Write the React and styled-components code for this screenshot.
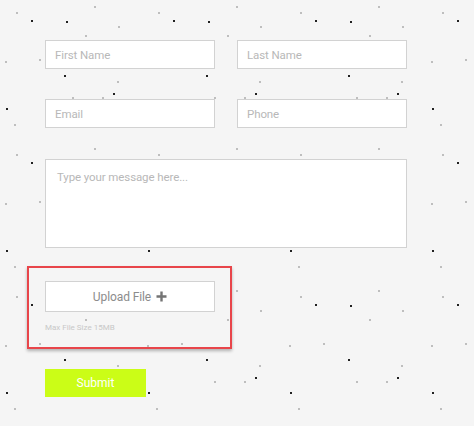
import React from "react";
import styled, { createGlobalStyle } from "styled-components";

const GlobalStyle = createGlobalStyle`
  html, body { margin: 0; padding: 0; }
  body { font-family: Roboto, "Liberation Sans", sans-serif; }
  * { box-sizing: border-box; }
`;

const dark = [
  [32, 21], [67, 22], [65, 76], [114, 94], [7, 109],
];
const light = [
  [17, 13], [95, 7], [6, 62], [40, 60], [73, 98], [103, 98],
  [118, 82], [15, 125], [86, 36], [119, 27],
];
const dotLayers = [
  ...dark.map(([x, y]) => `radial-gradient(circle at ${x}px ${y}px, #1e1e1e 0, #1e1e1e 0.7px, rgba(30,30,30,0) 1.3px)`),
  ...light.map(([x, y]) => `radial-gradient(circle at ${x}px ${y}px, #bdbdbd 0, #bdbdbd 0.7px, rgba(189,189,189,0) 1.4px)`),
].join(",");

const Page = styled.div`
  min-height: 100vh;
  background-color: #f5f5f5;
  background-image: ${dotLayers};
  background-size: 142px 142px;
  padding: 40px 0 0 45px;
`;

const Form = styled.form`
  display: grid;
  grid-template-columns: 170px 170px;
  column-gap: 22px;
  row-gap: 30px;
  width: 362px;
`;

const Field = styled.input`
  height: 29px;
  width: 100%;
  border: 1px solid #d2d2d2;
  background: #fff;
  padding: 0 9px;
  font-family: Roboto, "Liberation Sans", sans-serif;
  font-size: 11.5px;
  letter-spacing: -0.1px;
  color: #444;
  outline: none;
  &::placeholder { color: #b8b8b8; }
`;

const Message = styled.textarea`
  grid-column: 1 / -1;
  height: 89px;
  margin-top: 1px;
  border: 1px solid #d2d2d2;
  background: #fff;
  padding: 10px 11px;
  font-family: Roboto, "Liberation Sans", sans-serif;
  font-size: 11.5px;
  letter-spacing: -0.1px;
  resize: none;
  outline: none;
  &::placeholder { color: #b8b8b8; }
`;

const UploadGroup = styled.div`
  grid-column: 1 / 2;
  position: relative;
  margin-top: 3px;
  display: flex;
  flex-direction: column;
  gap: 11px;
  &::after {
    content: "";
    position: absolute;
    left: -18px;
    right: -17px;
    top: -15px;
    bottom: -16px;
    border: 2px solid #e8454a;
    box-shadow: 0 2px 3px rgba(0, 0, 0, 0.28);
    pointer-events: none;
  }
`;

const UploadButton = styled.button`
  height: 31px;
  width: 170px;
  border: 1px solid #d2d2d2;
  background: #fff;
  display: flex;
  align-items: center;
  justify-content: center;
  gap: 5px;
  padding: 0;
  font-family: Roboto, "Liberation Sans", sans-serif;
  font-size: 12px;
  letter-spacing: -0.1px;
  color: #8c8c8c;
  cursor: pointer;
`;

const Hint = styled.span`
  font-family: Roboto, "Liberation Sans", sans-serif;
  font-size: 8px;
  color: #c8c8c8;
  line-height: 10px;
`;

const Submit = styled.button`
  grid-column: 1 / 2;
  margin-top: 6px;
  width: 101px;
  height: 28px;
  border: none;
  background: #cbfd17;
  color: #fff;
  font-family: Roboto, "Liberation Sans", sans-serif;
  font-size: 12px;
  cursor: pointer;
`;

const Plus = () => (
  <svg width="11" height="11" viewBox="0 0 11 11" aria-hidden="true">
    <path d="M5.5 0.5v10M0.5 5.5h10" stroke="#747474" strokeWidth="2.4" />
  </svg>
);

export default function App() {
  return (
    <>
      <GlobalStyle />
      <Page>
        <Form onSubmit={(e) => e.preventDefault()}>
          <Field placeholder="First Name" />
          <Field placeholder="Last Name" />
          <Field placeholder="Email" />
          <Field placeholder="Phone" />
          <Message placeholder="Type your message here..." />
          <UploadGroup>
            <UploadButton type="button">
              Upload File <Plus />
            </UploadButton>
            <Hint>Max File Size 15MB</Hint>
          </UploadGroup>
          <Submit type="submit">Submit</Submit>
        </Form>
      </Page>
    </>
  );
}
